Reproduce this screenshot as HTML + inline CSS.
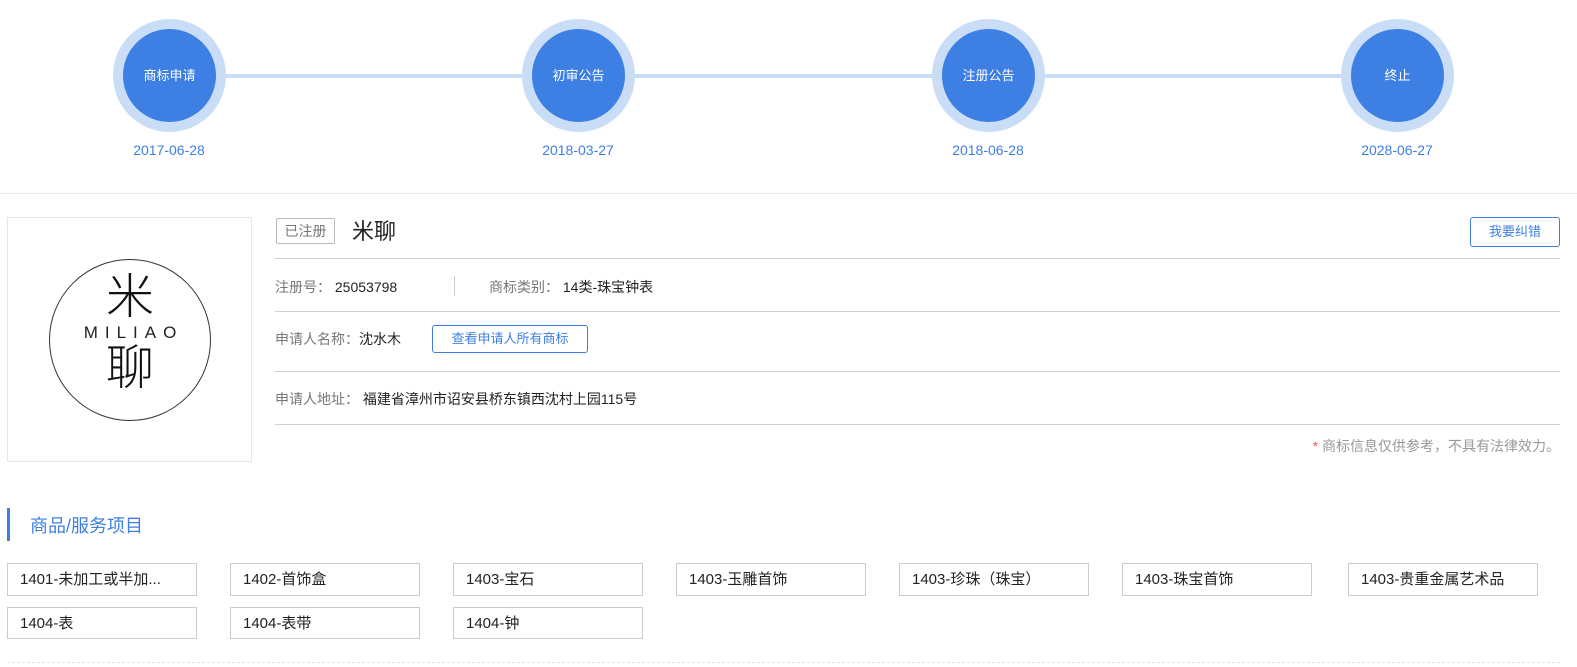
<!DOCTYPE html>
<html><head><meta charset="utf-8"><style>
*{margin:0;padding:0;box-sizing:border-box}
body{width:1577px;height:667px;background:#fff;font-family:"Liberation Sans","Noto Sans CJK SC",sans-serif;position:relative;overflow:hidden;color:#333}
.a{position:absolute}
.line{position:absolute;left:169px;top:74px;width:1228px;height:4px;background:#c9def6}
.c{position:absolute;width:113px;height:113px;border-radius:50%;background:#c9def6;top:19px}
.c div{position:absolute;left:10px;top:10px;width:93px;height:93px;border-radius:50%;background:#3e7fe4;color:#fff;font-size:13px;line-height:93px;text-align:center}
.d{position:absolute;top:142px;width:120px;text-align:center;color:#3f7fe5;font-size:14px}
.hr{position:absolute;left:275px;width:1285px;height:1px;background:#cfcfcf}
.lab{color:#777}
.row{position:absolute;left:275px;font-size:14px;color:#222}
.t{position:absolute;width:190px;height:33px;border:1px solid #ccc;font-size:15px;color:#222;padding-left:12px;line-height:31px}
</style></head><body>
<div class="line"></div>
<div class="c" style="left:113px"><div>商标申请</div></div>
<div class="c" style="left:522px"><div>初审公告</div></div>
<div class="c" style="left:932px"><div>注册公告</div></div>
<div class="c" style="left:1341px"><div>终止</div></div>
<div class="d" style="left:109px">2017-06-28</div>
<div class="d" style="left:518px">2018-03-27</div>
<div class="d" style="left:928px">2018-06-28</div>
<div class="d" style="left:1337px">2028-06-27</div>
<div class="a" style="left:0;top:193px;width:1577px;height:1px;background:#e8e8e8"></div>

<div class="a" style="left:7px;top:217px;width:245px;height:245px;border:1px solid #e6e6e6"></div>
<div class="a" style="left:49px;top:259px;width:162px;height:162px;border:1.5px solid #333;border-radius:50%;text-align:center">
<div style="font-size:48px;line-height:48px;margin-top:14px;color:#111;font-weight:300">米</div>
<div style="font-size:17px;letter-spacing:7px;line-height:22px;color:#222;padding-left:7px">MILIAO</div>
<div style="font-size:48px;line-height:50px;color:#111;font-weight:300">聊</div>
</div>

<div class="a" style="left:276px;top:218px;width:59px;height:26px;border:1px solid #bbb;border-radius:2px;color:#777;font-size:14px;line-height:24px;text-align:center">已注册</div>
<div class="a" style="left:352px;top:214px;font-size:22px;color:#222">米聊</div>
<div class="a" style="left:1470px;top:217px;width:90px;height:30px;border:1px solid #3f7fe5;border-radius:3px;color:#3f7fe5;font-size:13px;line-height:28px;text-align:center">我要纠错</div>
<div class="hr" style="top:258px"></div>
<div class="row" style="top:277px"><span class="lab">注册号：</span>&nbsp;25053798</div>
<div class="a" style="left:454px;top:276px;width:1px;height:20px;background:#ccc"></div>
<div class="row" style="left:489px;top:277px"><span class="lab">商标类别：</span>&nbsp;14类-珠宝钟表</div>
<div class="hr" style="top:311px"></div>
<div class="row" style="top:329px"><span class="lab">申请人名称：</span>沈水木</div>
<div class="a" style="left:432px;top:325px;width:156px;height:28px;border:1px solid #3f7fe5;border-radius:3px;color:#3f7fe5;font-size:13px;line-height:26px;text-align:center">查看申请人所有商标</div>
<div class="hr" style="top:371px"></div>
<div class="row" style="top:389px"><span class="lab">申请人地址：</span>&nbsp;福建省漳州市诏安县桥东镇西沈村上园115号</div>
<div class="hr" style="top:424px"></div>
<div class="a" style="right:17px;top:436px;font-size:14px;color:#999"><span style="color:#f55">*</span> 商标信息仅供参考，不具有法律效力。</div>

<div class="a" style="left:7px;top:508px;width:3px;height:33px;background:#3f7fe5"></div>
<div class="a" style="left:30px;top:512px;font-size:18px;color:#3f7fe5">商品/服务项目</div>
<div class="t" style="left:7px;top:563px">1401-未加工或半加...</div>
<div class="t" style="left:230px;top:563px">1402-首饰盒</div>
<div class="t" style="left:453px;top:563px">1403-宝石</div>
<div class="t" style="left:676px;top:563px">1403-玉雕首饰</div>
<div class="t" style="left:899px;top:563px">1403-珍珠（珠宝）</div>
<div class="t" style="left:1122px;top:563px">1403-珠宝首饰</div>
<div class="t" style="left:1348px;top:563px">1403-贵重金属艺术品</div>
<div class="t" style="left:7px;top:607px;height:32px">1404-表</div>
<div class="t" style="left:230px;top:607px;height:32px">1404-表带</div>
<div class="t" style="left:453px;top:607px;height:32px">1404-钟</div>
<div class="a" style="left:7px;top:662px;width:1553px;border-top:1px dashed #e6e6e6"></div>
</body></html>
